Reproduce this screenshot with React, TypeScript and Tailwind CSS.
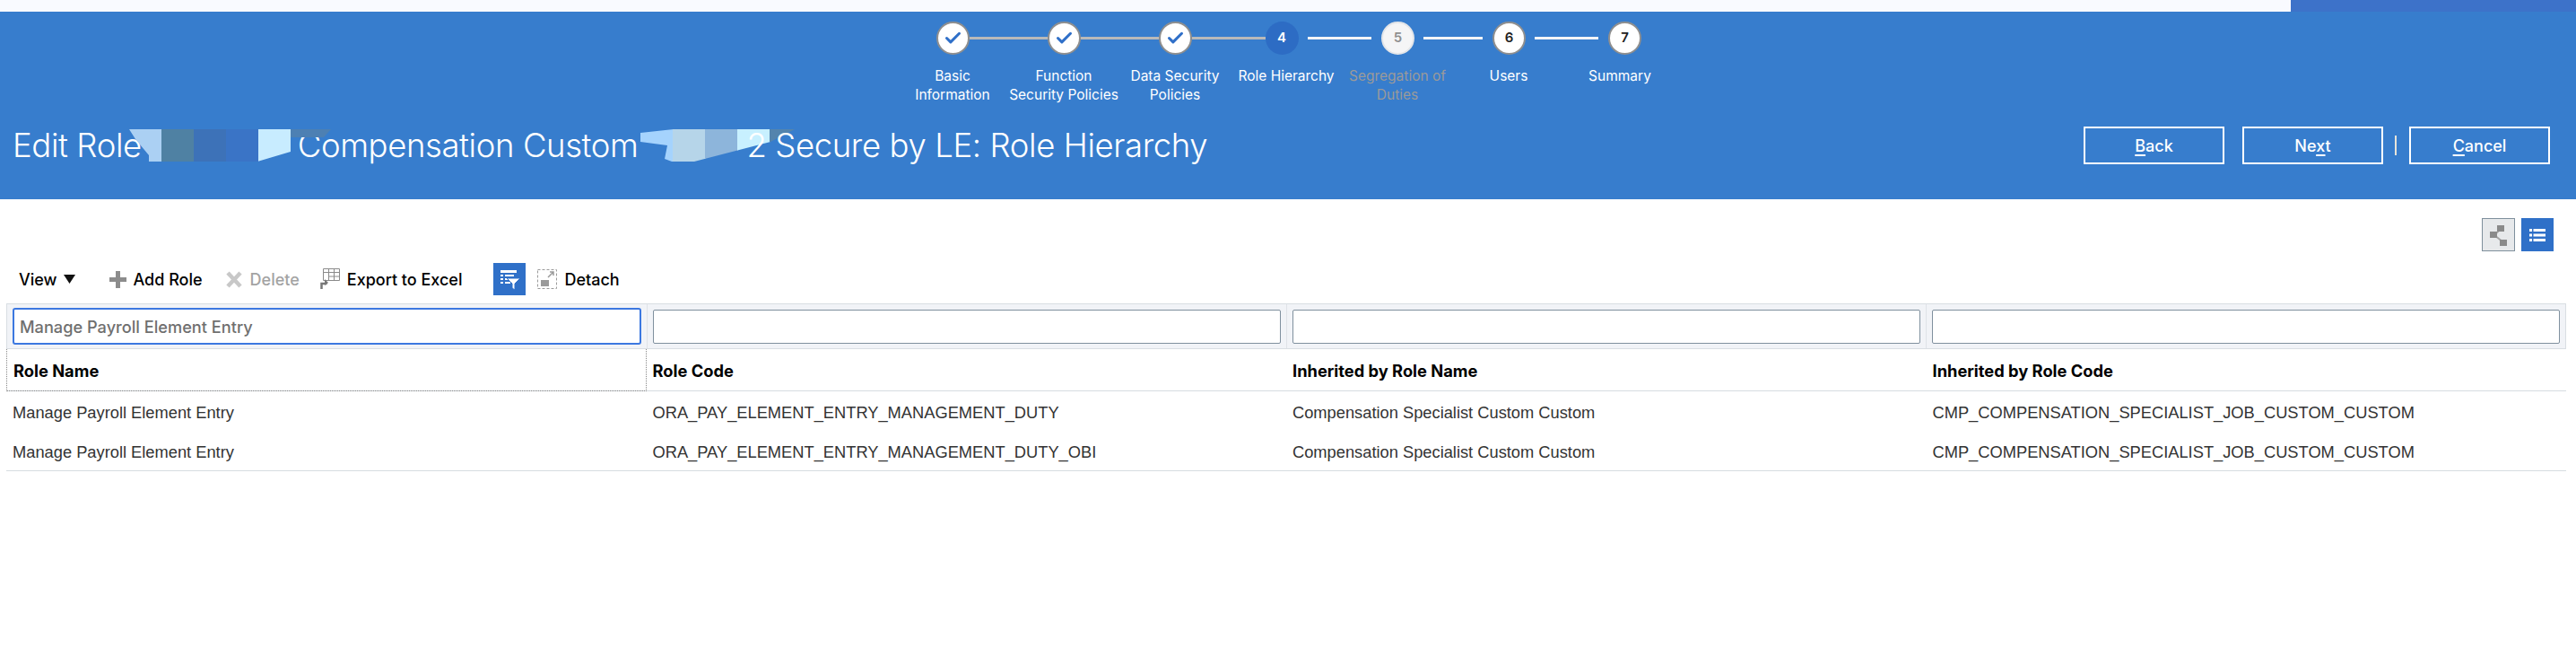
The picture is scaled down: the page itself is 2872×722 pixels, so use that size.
import { Check } from "lucide-react";

const font = "[font-family:Inter,'Liberation_Sans',sans-serif]";

const steps = [
  { label: ["Basic", "Information"], state: "done" },
  { label: ["Function", "Security Policies"], state: "done" },
  { label: ["Data Security", "Policies"], state: "done" },
  { label: ["Role Hierarchy"], state: "current" },
  { label: ["Segregation of", "Duties"], state: "disabled" },
  { label: ["Users"], state: "todo" },
  { label: ["Summary"], state: "todo" },
];

const rows = [
  [
    "Manage Payroll Element Entry",
    "ORA_PAY_ELEMENT_ENTRY_MANAGEMENT_DUTY",
    "Compensation Specialist Custom Custom",
    "CMP_COMPENSATION_SPECIALIST_JOB_CUSTOM_CUSTOM",
  ],
  [
    "Manage Payroll Element Entry",
    "ORA_PAY_ELEMENT_ENTRY_MANAGEMENT_DUTY_OBI",
    "Compensation Specialist Custom Custom",
    "CMP_COMPENSATION_SPECIALIST_JOB_CUSTOM_CUSTOM",
  ],
];

function Step({ index }: { index: number }) {
  const step = steps[index];
  const leftDone = index <= 3;
  const rightDone = index < 3;

  return (
    <div className="flex w-[124px] flex-col items-center">
      <div className="flex h-[37px] w-full items-center">
        {index === 0 ? (
          <div className="flex-1" />
        ) : leftDone ? (
          <div className="h-[3px] flex-1 bg-[#b9b9b9]" />
        ) : (
          <div className="mr-[11px] h-[3px] flex-1 bg-[#f2f4f7]" />
        )}
        {step.state === "done" && (
          <div className="flex h-[37px] w-[37px] items-center justify-center rounded-full border-2 border-[#8f8f8f] bg-white">
            <Check className="h-[21px] w-[21px] text-[#2f6fc8]" strokeWidth={3.5} />
          </div>
        )}
        {step.state === "current" && (
          <div className="flex h-[37px] w-[37px] items-center justify-center rounded-full bg-[#2d6cc4] text-[15px] font-semibold text-white">
            4
          </div>
        )}
        {step.state === "disabled" && (
          <div className="flex h-[37px] w-[37px] items-center justify-center rounded-full border-2 border-[#e3e5e8] bg-[#f5f5f6] text-[15px] font-semibold text-[#8f8f8f]">
            5
          </div>
        )}
        {step.state === "todo" && (
          <div className="flex h-[37px] w-[37px] items-center justify-center rounded-full border-2 border-[#8f8f8f] bg-white text-[15px] font-semibold text-[#222]">
            {index + 1}
          </div>
        )}
        {index === 6 ? (
          <div className="flex-1" />
        ) : rightDone ? (
          <div className="h-[3px] flex-1 bg-[#b9b9b9]" />
        ) : (
          <div className="ml-[10px] h-[3px] flex-1 bg-[#f2f4f7]" />
        )}
      </div>
      <div
        className={`mt-[13px] whitespace-nowrap text-center text-[15.5px] leading-[21px] ${
          step.state === "disabled" ? "text-[#9a9a9a]" : "text-white"
        }`}
      >
        {step.label.map((line) => (
          <div key={line}>{line}</div>
        ))}
      </div>
    </div>
  );
}

// the blurred-out bits of the title
function Patch({ colors, width, points, id }: { colors: string[]; width: number; points: string; id: string }) {
  return (
    <svg width={width} height={37} className="relative z-10 shrink-0">
      <defs>
        <clipPath id={id}>
          <polygon points={points} />
        </clipPath>
      </defs>
      <g clipPath={`url(#${id})`}>
        {colors.map((c, i) => (
          <rect key={i} x={i * 36} y={0} width={i === colors.length - 1 ? 60 : 37} height={37} fill={c} />
        ))}
      </g>
    </svg>
  );
}

function Btn({ label, u, className }: { label: string; u: number; className?: string }) {
  return (
    <button
      className={`flex h-[42px] w-[157px] items-center justify-center border-2 border-white text-[18px] font-medium text-white ${className ?? ""}`}
    >
      <span>
        {label.slice(0, u)}
        <span className="underline decoration-2 underline-offset-[3px]">{label[u]}</span>
        {label.slice(u + 1)}
      </span>
    </button>
  );
}

export default function App() {
  return (
    <div className={`min-h-screen w-full bg-white ${font}`}>
      <div className="flex h-[13px] justify-end bg-[#f9faff]">
        <div className="w-[318px] bg-[#3d72c9]" />
      </div>

      <div className="h-[209px] bg-[#377dcd] text-white">
        <div className="flex pl-[1000px] pt-[11px]">
          {steps.map((_, i) => (
            <Step key={i} index={i} />
          ))}
        </div>

        <div className="flex items-center justify-between pl-[14px] pr-[29px] pt-[23px]">
          <div className="flex items-center whitespace-nowrap text-[36.5px] font-[350] leading-[46px] tracking-[-0.4px]">
            <span>Edit Role</span>
            <span className="ml-[-14px] flex">
              <Patch
                id="patch-a"
                width={225}
                points="0,0 225,0 217,9 180,9 180,25 143,36 22,36 22,29 7,11"
                colors={["#abd0f3", "#4f81a3", "#3d72b8", "#3a74c6", "#c8ecff", "#4d80b3"]}
              />
            </span>
            <span className="ml-[-37px]">Compensation Custom</span>
            <span className="ml-[3px] flex">
              <Patch
                id="patch-b"
                width={172}
                points="0,4 37,0 172,0 145,14 60,36 35,36 27,33 30,18 0,14"
                colors={["#a5d3fd", "#b6d5e9", "#8db5db", "#c8f0ff", "#5484ad"]}
              />
            </span>
            <span className="relative z-20 ml-[-54px]">2 Secure by LE: Role Hierarchy</span>
          </div>

          <div className="flex items-center">
            <Btn label="Back" u={0} />
            <Btn label="Next" u={2} className="ml-[20px]" />
            <div className="ml-[13px] h-[22px] w-[2px] bg-[#e8e4da]" />
            <Btn label="Cancel" u={0} className="ml-[14px]" />
          </div>
        </div>
      </div>

      <div className="flex justify-end gap-[7px] pr-[25px] pt-[21px]">
        <button className="flex h-[37px] w-[37px] items-center justify-center border border-[#7f8f9c] bg-[#e7e9eb]">
          <svg width="20" height="24" viewBox="0 0 20 24">
            <path d="M5 12 L13 4 M5 12 L15 20" stroke="#a5a5a5" strokeWidth="2" fill="none" />
            <rect x="8" y="1" width="8" height="7" fill="#8a8a8a" />
            <rect x="0" y="8" width="8" height="7" fill="#8a8a8a" />
            <rect x="11" y="17" width="8" height="7" fill="#8a8a8a" />
          </svg>
        </button>
        <button className="flex h-[37px] w-[36px] items-center justify-center bg-[#2f70c8]">
          <svg width="18" height="14" viewBox="0 0 18 14" fill="white">
            <rect x="0" y="0" width="3" height="3" />
            <rect x="4.5" y="0" width="13.5" height="3" />
            <rect x="0" y="5.5" width="3" height="3" />
            <rect x="4.5" y="5.5" width="13.5" height="3" />
            <rect x="0" y="11" width="3" height="3" />
            <rect x="4.5" y="11" width="13.5" height="3" />
          </svg>
        </button>
      </div>

      <div className="mt-[13px] flex h-[36px] items-center pl-[21px] text-[18px] font-medium text-black">
        <span>View</span>
        <svg width="13" height="10" viewBox="0 0 13 10" className="ml-[7px]">
          <polygon points="0,0 13,0 6.5,10" fill="#111" />
        </svg>

        <svg width="19" height="19" viewBox="0 0 19 19" className="ml-[38px]">
          <path d="M7 0h5v7h7v5h-7v7H7v-7H0V7h7z" fill="#8c8c8c" />
        </svg>
        <span className="ml-[8px]">Add Role</span>

        <svg width="18" height="19" viewBox="0 0 18 19" className="ml-[26px]">
          <path d="M2 2 L16 17 M16 2 L2 17" stroke="#c8c8c8" strokeWidth="4.5" />
        </svg>
        <span className="ml-[9px] text-[#a3a3a3]">Delete</span>

        <svg width="22" height="24" viewBox="0 0 22 24" className="ml-[23px]" fill="none" stroke="#8a8a8a">
          <path d="M3.5 0.5h18v13h-18z M3.5 4.5h18 M9.5 0.5v13 M15.5 0.5v13 M9.5 9h12" strokeWidth="1" />
          <path d="M1.5 23v-6h6" stroke="#777" strokeWidth="2.5" />
          <path d="M5 12l4 4-4 3" fill="#777" stroke="none" />
        </svg>
        <span className="ml-[8px]">Export to Excel</span>

        <button className="ml-[35px] flex h-[36px] w-[36px] items-center justify-center bg-[#2f70c8]">
          <svg width="23" height="23" viewBox="0 0 23 23" fill="none">
            <path d="M1 1h18v3H1z M1 6h3v2H1z M6 6h10v2H6z M1 10h3v2H1z M6 10h4v2H6z M1 14h3v2H1z M6 14h6v2H6z" fill="white" />
            <path d="M8 10h15l-6 6v7l-3-2v-5z" fill="white" stroke="#2f70c8" strokeWidth="1" />
          </svg>
        </button>

        <svg width="22" height="22" viewBox="0 0 22 22" className="ml-[13px]" fill="none">
          <rect x="0.5" y="0.5" width="21" height="21" stroke="#9a9a9a" strokeDasharray="3 2" />
          <rect x="4" y="12" width="9" height="7" fill="#9a9a9a" />
          <path d="M12 9l6-6M14 3h4v4" stroke="#9a9a9a" strokeWidth="1.5" />
        </svg>
        <span className="ml-[8px]">Detach</span>
      </div>

      <div className="ml-[7px] mr-[11px] mt-[9px]">
        <div className="grid h-[51px] grid-cols-4 border border-[#d9dee3] bg-[#f1f3f7]">
          {[0, 1, 2, 3].map((i) => (
            <div key={i} className={`flex items-center px-[6px] ${i > 0 ? "border-l border-[#dfe3e8]" : ""}`}>
              {i === 0 ? (
                <input
                  readOnly
                  value="Manage Payroll Element Entry"
                  className="h-[41px] w-full rounded-[3px] border-2 border-[#3c78e0] bg-white px-[6px] text-[18.2px] font-medium text-[#6f6f6f] outline-none"
                />
              ) : (
                <input
                  readOnly
                  className="h-[38px] w-full rounded-[2px] border border-[#7f909e] bg-white outline-none"
                />
              )}
            </div>
          ))}
        </div>

        <div className="grid h-[47px] grid-cols-4 border-b border-[#d6dce1] text-[18.3px] font-bold text-black">
          {["Role Name", "Role Code", "Inherited by Role Name", "Inherited by Role Code"].map((h, i) => (
            <div
              key={h}
              className={`flex items-center px-[7px] pt-[4px] ${
                i === 0 ? "mb-[-1px] border-b border-l border-r border-dotted border-[#888]" : ""
              }`}
            >
              {h}
            </div>
          ))}
        </div>

        <div className="border-b border-[#d6dce1] text-[18.3px] text-[#333] [font-family:'Liberation_Sans',sans-serif]">
          {rows.map((row, r) => (
            <div key={r} className="grid h-[44px] grid-cols-4 pt-[3px]">
              {row.map((c, i) => (
                <div key={i} className="flex items-center px-[7px]">
                  {c}
                </div>
              ))}
            </div>
          ))}
        </div>
      </div>
    </div>
  );
}
